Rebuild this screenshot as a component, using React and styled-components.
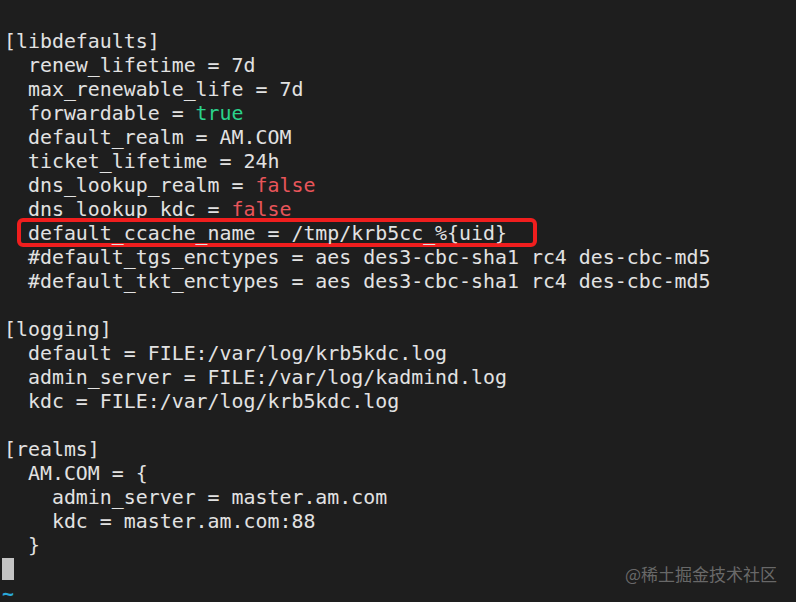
import React from "react";
import styled, { createGlobalStyle } from "styled-components";

const GlobalStyle = createGlobalStyle`
  html, body {
    margin: 0;
    padding: 0;
    background: #1e1e1e;
  }
`;

const config = [
  { text: "[libdefaults]" },
  { text: "  renew_lifetime = 7d" },
  { text: "  max_renewable_life = 7d" },
  { text: "  forwardable = ", value: "true", tone: "good" },
  { text: "  default_realm = AM.COM" },
  { text: "  ticket_lifetime = 24h" },
  { text: "  dns_lookup_realm = ", value: "false", tone: "bad" },
  { text: "  dns_lookup_kdc = ", value: "false", tone: "bad" },
  { text: "  default_ccache_name = /tmp/krb5cc_%{uid}", marked: true },
  { text: "  #default_tgs_enctypes = aes des3-cbc-sha1 rc4 des-cbc-md5" },
  { text: "  #default_tkt_enctypes = aes des3-cbc-sha1 rc4 des-cbc-md5" },
  { text: "" },
  { text: "[logging]" },
  { text: "  default = FILE:/var/log/krb5kdc.log" },
  { text: "  admin_server = FILE:/var/log/kadmind.log" },
  { text: "  kdc = FILE:/var/log/krb5kdc.log" },
  { text: "" },
  { text: "[realms]" },
  { text: "  AM.COM = {" },
  { text: "    admin_server = master.am.com" },
  { text: "    kdc = master.am.com:88" },
  { text: "  }" },
];

function App() {
  return (
    <>
      <GlobalStyle />
      <Terminal>
        {config.map((line, i) => (
          <Line key={i}>
            <Text raised={line.marked}>
              {line.text}
              {line.value && <Value tone={line.tone}>{line.value}</Value>}
            </Text>
            {line.marked && <Highlight />}
          </Line>
        ))}
        <Line>
          <Cursor />
        </Line>
        <Tilde>~</Tilde>
        <Watermark>@稀土掘金技术社区</Watermark>
      </Terminal>
    </>
  );
}

export default App;

const Terminal = styled.div`
  position: relative;
  width: 796px;
  height: 602px;
  box-sizing: border-box;
  padding: 30px 0 0 4px;
  background: #1e1e1e;
  color: #e2e2e2;
  font-family: "DejaVu Sans Mono", "Liberation Mono", monospace;
  font-size: 19.9px;
  line-height: 24px;
  overflow: hidden;
`;

const Line = styled.div`
  position: relative;
  height: 24px;
  white-space: pre;
`;

const Text = styled.span`
  position: ${(props) => (props.raised ? "relative" : "static")};
  z-index: ${(props) => (props.raised ? 1 : "auto")};
`;

const Value = styled.span`
  color: ${(props) => (props.tone === "good" ? "#2bd38c" : "#e8555a")};
`;

const Highlight = styled.span`
  position: absolute;
  left: 13px;
  top: -4px;
  width: 520px;
  height: 29px;
  border: 4px solid #f01e1e;
  border-radius: 6px;
  box-sizing: border-box;
  pointer-events: none;
`;

const Cursor = styled.span`
  display: inline-block;
  width: 12px;
  height: 22px;
  margin-top: 0;
  margin-left: -2px;
  background: #c4c4c4;
  vertical-align: top;
`;

const Tilde = styled.div`
  height: 24px;
  margin-left: -2px;
  color: #2aa8d8;
  font-weight: bold;
`;

const Watermark = styled.div`
  position: absolute;
  right: 19px;
  bottom: 17px;
  font-family: "Noto Sans CJK SC", "Noto Sans", sans-serif;
  font-size: 17px;
  line-height: 22px;
  color: rgba(170, 170, 170, 0.55);
`;
